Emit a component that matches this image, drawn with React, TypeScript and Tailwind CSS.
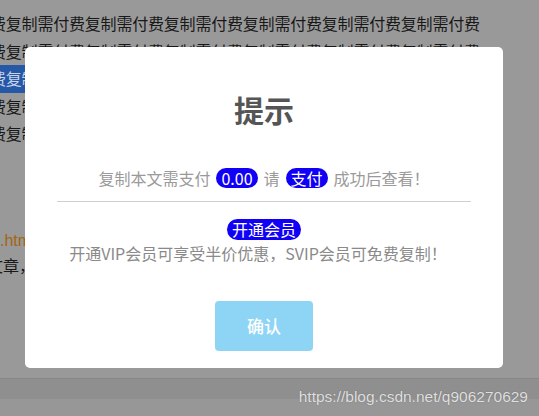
import React from 'react';

const rowText = '费复制需付费复制需付费复制需付费复制需付费复制需付费复制需付费';

const Badge = ({ children }: { children: React.ReactNode }) => (
  <span className="mx-[6px] inline-block rounded-full bg-[#1100f6] px-[5px] text-[16px] leading-[20px] text-white">
    {children}
  </span>
);

const PayDialog = () => (
  <div className="absolute left-[25px] top-[47px] flex h-[321px] w-[478px] flex-col items-center rounded-[5px] bg-white">
    {/* Title */}
    <h2 className="pt-[42px] text-[30px] font-bold leading-[40px] text-[#555]">提示</h2>

    {/* Pay line */}
    <p className="mt-[37px] flex items-center text-[16px] leading-[24px] text-[#9a9a9a]">
      复制本文需支付
      <Badge>0.00</Badge>
      请
      <Badge>支付</Badge>
      成功后查看！
    </p>

    <div className="mt-[11px] h-px w-[414px] bg-[#cfcfcf]" />

    {/* VIP */}
    <div className="mt-[16px] leading-[22px]">
      <span className="inline-block rounded-full bg-[#1100f6] px-[5px] text-[16px] leading-[21px] text-white">
        开通会员
      </span>
    </div>
    <p className="mr-[12px] mt-px text-[16px] leading-[24px] text-[#8a8a8a]">
      开通VIP会员可享受半价优惠，SVIP会员可免费复制！
    </p>

    <button className="mt-[36px] h-[50px] w-[98px] rounded-[4px] bg-[#8ed5f5] text-[17px] font-medium text-white">
      确认
    </button>
  </div>
);

export default function App() {
  return (
    <div className="relative flex h-[416px] w-[539px] flex-col overflow-hidden bg-[#999] font-['Microsoft_YaHei','Noto_Sans_CJK_SC',sans-serif]">
      {/* Page behind the dialog (already dimmed) */}
      <div className="-ml-[10px] whitespace-nowrap pt-[10px] text-[16px] leading-[27.5px] tracking-[-0.2px] text-[#181818]">
        <div>{rowText}</div>
        <div>{rowText}</div>
        <div className="w-[498px] bg-[#2559a8] text-[#c9d3e6]">{rowText}</div>
        <div>{rowText}</div>
        <div>{rowText}</div>
      </div>

      <div className="mt-[80px] whitespace-nowrap text-[16px] leading-[25px]">
        <div className="text-[#a4650f] font-['Liberation_Sans',sans-serif]">.html</div>
        <div className="-ml-[13px] text-[#181818]">文章，</div>
      </div>

      <div className="mt-auto">
        <div className="h-[21px] border-t border-[#878787] bg-[#8f8f8f]" />
        <div className="h-[17px] bg-[#979797]" />
      </div>

      <div className="absolute right-[11px] top-[387px] text-[15.5px] leading-[20px] text-[#e0e0e0] font-['Liberation_Sans',sans-serif] [text-shadow:0_0_1px_rgba(0,0,0,0.35)]">
        https://blog.csdn.net/q906270629
      </div>

      <PayDialog />
    </div>
  );
}
